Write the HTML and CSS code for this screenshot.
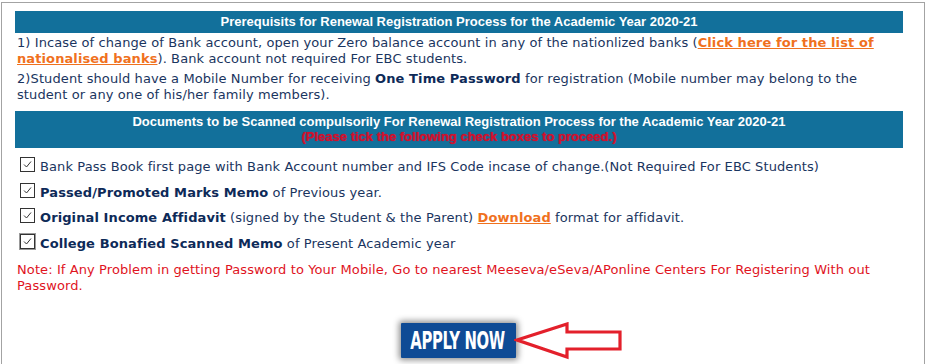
FILE: index.html
```html
<!DOCTYPE html>
<html>
<head>
<meta charset="utf-8">
<link rel="stylesheet" href="styles.css">
</head>
<body>
<div class="frame">
  <div class="bar">Prerequisits for Renewal Registration Process for the Academic Year 2020-21</div>
  <p class="para">1) Incase of change of Bank account, open your Zero balance account in any of the nationlized banks (<a class="link" href="#">Click here for the list of nationalised banks</a>). Bank account not required For EBC students.</p>
  <p class="para">2)Student should have a Mobile Number for receiving <b>One Time Password</b> for registration (Mobile number may belong to the student or any one of his/her family members).</p>
  <div class="bar bar-two">
    <div>Documents to be Scanned compulsorily For Renewal Registration Process for the Academic Year 2020-21</div>
    <div class="bar-red">(Please tick the following check boxes to proceed.)</div>
  </div>
  <ul class="checks">
    <li><span class="box"><svg viewBox="0 0 13 13" width="13" height="13"><path d="M3 6.5 L5.5 9 L10 3.5" fill="none" stroke="#333" stroke-width="1"/></svg></span><span class="item">Bank Pass Book first page with Bank Account number and IFS Code incase of change.(Not Required For EBC Students)</span></li>
    <li><span class="box"><svg viewBox="0 0 13 13" width="13" height="13"><path d="M3 6.5 L5.5 9 L10 3.5" fill="none" stroke="#333" stroke-width="1"/></svg></span><span class="item"><b>Passed/Promoted Marks Memo</b> of Previous year.</span></li>
    <li><span class="box"><svg viewBox="0 0 13 13" width="13" height="13"><path d="M3 6.5 L5.5 9 L10 3.5" fill="none" stroke="#333" stroke-width="1"/></svg></span><span class="item"><b>Original Income Affidavit</b> (signed by the Student &amp; the Parent) <a class="link" href="#">Download</a> format for affidavit.</span></li>
    <li><span class="box box-focus"><svg viewBox="0 0 13 13" width="13" height="13"><path d="M3 6.5 L5.5 9 L10 3.5" fill="none" stroke="#333" stroke-width="1"/></svg></span><span class="item"><b>College Bonafied Scanned Memo</b> of Present Academic year</span></li>
  </ul>
  <p class="note">Note: If Any Problem in getting Password to Your Mobile, Go to nearest Meeseva/eSeva/APonline Centers For Registering With out Password.</p>
  <div class="apply-row">
    <a class="apply" href="#"><span class="apply-text">APPLY NOW</span></a>
    <svg class="arrow" width="112" height="38" viewBox="0 0 112 38"><polygon points="3,18 53,2 53,10 106,10 106,27 53,27 53,35" fill="none" stroke="#e3202b" stroke-width="3.2" stroke-linejoin="miter"/></svg>
  </div>
</div>
</body>
</html>
```
FILE: styles.css
```css
html, body {
  margin: 0;
  padding: 0;
  background: #fff;
}
body {
  font-family: "DejaVu Sans", Verdana, sans-serif;
  font-size: 13px;
  letter-spacing: 0.1px;
  color: #1a3560;
  overflow: hidden;
}
.frame {
  box-sizing: border-box;
  margin: 2px 1px 0 1px;
  border: 1px solid #a3a3a3;
  border-bottom: none;
  height: 362px;
  overflow: hidden;
  padding: 8px 21px 0 13px;
}
.bar {
  background: #12709b;
  color: #fff;
  font-family: "Liberation Sans", Arial, sans-serif;
  font-weight: bold;
  font-size: 13px;
  letter-spacing: 0;
  text-align: center;
  height: 22px;
  line-height: 22px;
}
.bar-two {
  height: auto;
  line-height: 15px;
  padding: 3px 0 4px;
  margin-top: 8px;
}
.bar-red {
  color: #d0102e;
  text-shadow: 0 0 1px #d0102e;
}
.para {
  margin: 2px 0 0 2px;
  line-height: 16px;
}
.para + .para {
  margin-top: 4px;
}
.para b {
  color: #0d2a58;
}
.link {
  color: #f0711e;
  font-weight: bold;
  text-decoration: underline;
}
.checks {
  list-style: none;
  margin: 6px 0 0 5px;
  padding: 0;
}
.checks li {
  display: flex;
  align-items: center;
  height: 25.5px;
}
.item {
  white-space: nowrap;
}
.checks b {
  color: #0d2a58;
}
.box {
  width: 13px;
  height: 13px;
  border: 1px solid #333;
  margin-right: 5px;
  flex: none;
  display: flex;
  margin-top: -4px;
  background: #fff;
}
.box-focus {
  outline: 1px solid #999;
}
.note {
  color: #e0141e;
  margin: 6px 0 0 2px;
  line-height: 16px;
}
.apply-row {
  position: relative;
  display: flex;
  justify-content: center;
  margin-top: 29px;
  padding-right: 2px;
}
.apply {
  display: flex;
  align-items: center;
  justify-content: center;
  width: 115px;
  height: 35px;
  background: #0f4b95;
  box-shadow: 0 0 6px 2px rgba(0,0,0,0.45);
  text-decoration: none;
  border-radius: 1px;
}
.apply-text {
  color: #fff;
  font-family: "Liberation Sans Narrow", "DejaVu Sans Condensed", "Liberation Sans", sans-serif;
  font-weight: bold;
  font-size: 25px;
  letter-spacing: -0.5px;
  display: inline-block;
  transform: scaleX(0.66);
  white-space: nowrap;
}
.arrow {
  position: absolute;
  left: 499px;
  top: -1px;
}
```
